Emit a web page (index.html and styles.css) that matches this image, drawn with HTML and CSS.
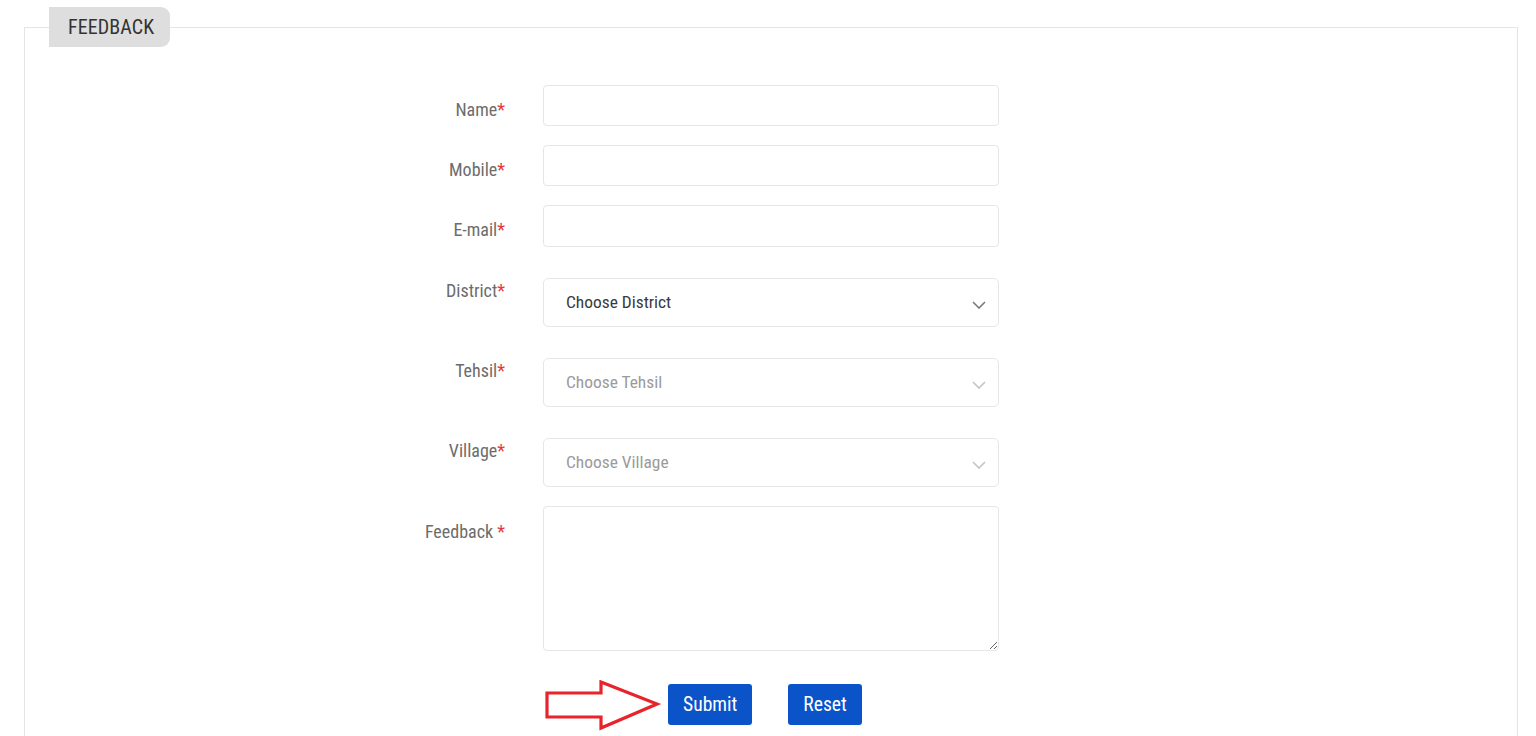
FILE: index.html
```html
<!DOCTYPE html>
<html>
<head>
<meta charset="utf-8">
<link rel="stylesheet" href="styles.css">
</head>
<body>
<fieldset class="panel">
  <legend class="tab">FEEDBACK</legend>
  <form class="form">
    <div class="row row-input">
      <label class="lbl">Name<span class="req">*</span></label>
      <input class="ctl" type="text">
    </div>
    <div class="row row-input">
      <label class="lbl">Mobile<span class="req">*</span></label>
      <input class="ctl" type="text">
    </div>
    <div class="row row-input">
      <label class="lbl">E-mail<span class="req">*</span></label>
      <input class="ctl ctl-tall" type="text">
    </div>
    <div class="row row-select first-select">
      <label class="lbl">District<span class="req">*</span></label>
      <div class="sel">
        <span class="sel-text">Choose District</span>
        <svg class="chev" width="14" height="8" viewBox="0 0 14 8"><path d="M1 1l6 6 6-6" fill="none" stroke="#7a7a7a" stroke-width="1.6"/></svg>
      </div>
    </div>
    <div class="row row-select">
      <label class="lbl">Tehsil<span class="req">*</span></label>
      <div class="sel sel-off">
        <span class="sel-text">Choose Tehsil</span>
        <svg class="chev" width="14" height="8" viewBox="0 0 14 8"><path d="M1 1l6 6 6-6" fill="none" stroke="#c4c4c4" stroke-width="1.6"/></svg>
      </div>
    </div>
    <div class="row row-select">
      <label class="lbl">Village<span class="req">*</span></label>
      <div class="sel sel-off">
        <span class="sel-text">Choose Village</span>
        <svg class="chev" width="14" height="8" viewBox="0 0 14 8"><path d="M1 1l6 6 6-6" fill="none" stroke="#c4c4c4" stroke-width="1.6"/></svg>
      </div>
    </div>
    <div class="row row-area">
      <label class="lbl">Feedback <span class="req">*</span></label>
      <textarea class="area"></textarea>
    </div>
    <div class="row row-btns">
      <div class="btns">
        <svg class="arrow" width="118" height="52" viewBox="0 0 118 52"><polygon points="3,13 57,13 57,2 113,24 57,48 57,37 3,37" fill="none" stroke="#e8232b" stroke-width="3.2" stroke-linejoin="miter"/></svg>
        <button type="button" class="btn">Submit</button>
        <button type="button" class="btn">Reset</button>
      </div>
    </div>
  </form>
</fieldset>
</body>
</html>
```

FILE: styles.css
```css
html, body {
  margin: 0;
  padding: 0;
  background: #ffffff;
  overflow: hidden;
}
body {
  font-family: "Roboto Condensed", Roboto, "Liberation Sans", sans-serif;
  font-stretch: condensed;
  padding: 7px 18px 0 24px;
  height: 736px;
  box-sizing: border-box;
}
.panel {
  margin: 0;
  border: 1px solid #e4e4e4;
  border-bottom: none;
  padding: 0 0 40px 0;
  min-height: 760px;
  box-sizing: border-box;
  min-width: 0;
}
.tab {
  margin-left: 24px;
  background: #dedede;
  color: #333;
  font-size: 20px;
  height: 40px;
  line-height: 40px;
  padding: 0 16px 0 19px;
  border-radius: 0 9px 9px 0;
  letter-spacing: 0.1px;
}
.form {
  margin-top: 38px;
}
.row {
  display: grid;
  grid-template-columns: 1fr 456px 1fr;
}
.row-input { margin-bottom: 19px; }
.row-input .lbl { padding-top: 14px; }
.first-select { margin-top: 31px; }
.row-select { margin-bottom: 31px; }
.row-select .lbl { padding-top: 2px; }
.row-area { margin-top: -12px; margin-bottom: 33px; }
.row-area .lbl { padding-top: 15px; }
.lbl {
  grid-column: 1;
  text-align: right;
  padding-right: 38px;
  font-size: 18px;
  line-height: 22px;
  color: #6c6c6c;
}
.req { color: #e53a3a; }
.ctl {
  grid-column: 2;
  height: 41px;
  box-sizing: border-box;
  border: 1px solid #e6e6e6;
  border-radius: 4px;
  margin: 0;
  padding: 0 12px;
  font: inherit;
  outline: none;
}
.ctl-tall { height: 42px; }
.sel {
  grid-column: 2;
  height: 49px;
  box-sizing: border-box;
  border: 1px solid #e6e6e6;
  border-radius: 5px;
  display: flex;
  align-items: center;
  justify-content: space-between;
  padding: 0 12px 0 22px;
}
.sel-text {
  font-size: 17.4px;
  color: #3a3a3a;
  margin-top: -1px;
}
.sel-off .sel-text { color: #9a9a9a; }
.chev { margin-top: 4px; }
.area {
  grid-column: 2;
  height: 145px;
  box-sizing: border-box;
  border: 1px solid #e6e6e6;
  border-radius: 4px;
  margin: 0;
  font: inherit;
  outline: none;
  resize: vertical;
}
.btns {
  grid-column: 2;
  display: flex;
  gap: 36px;
  padding-left: 125px;
  position: relative;
}
.btn {
  height: 41px;
  padding: 0 15px;
  background: #0b53c8;
  color: #ffffff;
  border: none;
  border-radius: 3px;
  font-family: inherit;
  font-stretch: condensed;
  font-size: 19.6px;
  line-height: 41px;
}
.arrow {
  position: absolute;
  left: 1px;
  top: -4px;
}
```
